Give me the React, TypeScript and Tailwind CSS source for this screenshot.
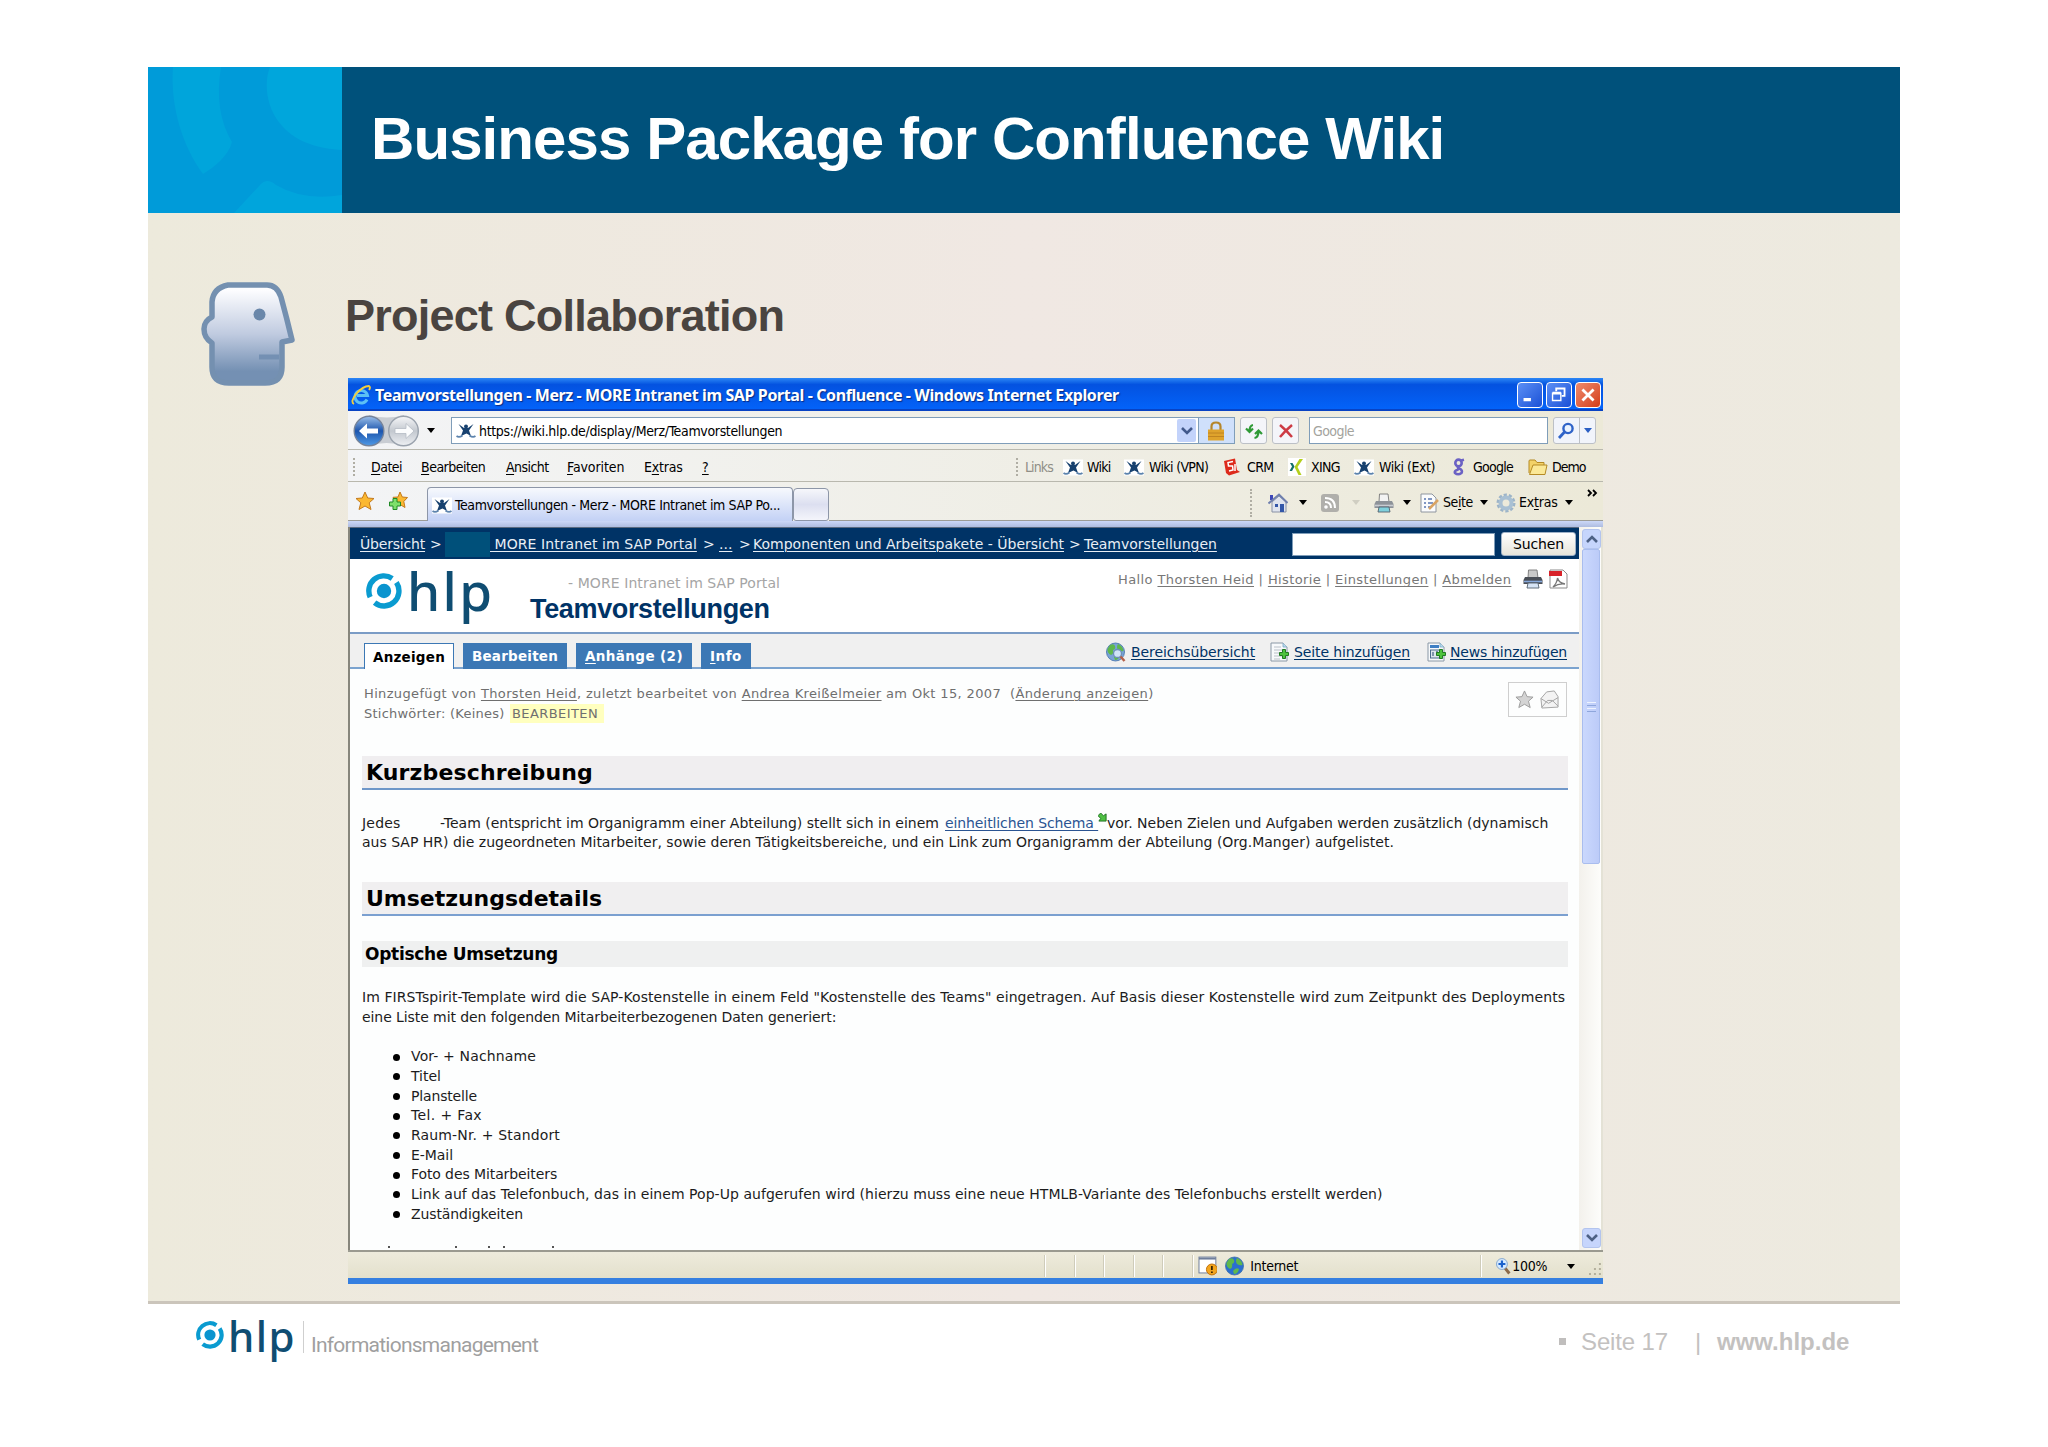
import type { ReactNode } from 'react';

const links = [
  { label: 'Wiki', icon: 'wiki', box: 'ml-[10px] w-[20px]', text: 'ml-[4px] w-[23px] tracking-[-0.75px]' },
  { label: 'Wiki (VPN)', icon: 'wiki', box: 'ml-[14px] w-[20px]', text: 'ml-[5px] w-[59px] tracking-[-0.66px]' },
  { label: 'CRM', icon: 'crm', box: 'ml-[15px] w-[18px]', text: 'ml-[6px] w-[26px] tracking-[-0.6px]' },
  { label: 'XING', icon: 'xing', box: 'ml-[15px] w-[18px]', text: 'ml-[5px] w-[29px] tracking-[-0.7px]' },
  { label: 'Wiki (Ext)', icon: 'wiki', box: 'ml-[14px] w-[20px]', text: 'ml-[5px] w-[56px] tracking-[-0.48px]' },
  { label: 'Google', icon: 'google', box: 'ml-[15px] w-[18px]', text: 'ml-[5px] w-[40px] tracking-[-0.73px]' },
  { label: 'Demo', icon: 'folder', box: 'ml-[15px] w-[20px]', text: 'ml-[4px] w-[33px] tracking-[-1px]' },
];

const bullets = [
  { text: 'Vor- + Nachname', className: 'tracking-[0.14px]' },
  { text: 'Titel', className: '' },
  { text: 'Planstelle', className: 'tracking-[-0.16px]' },
  { text: 'Tel. + Fax', className: 'tracking-[0.36px]' },
  { text: 'Raum-Nr. + Standort', className: 'tracking-[0.15px]' },
  { text: 'E-Mail', className: 'tracking-[-0.06px]' },
  { text: 'Foto des Mitarbeiters', className: 'tracking-[-0.1px]' },
  {
    text: 'Link auf das Telefonbuch, das in einem Pop-Up aufgerufen wird (hierzu muss eine neue HTMLB-Variante des Telefonbuchs erstellt werden)',
    className: 'tracking-[0.04px]',
  },
  { text: 'Zuständigkeiten', className: 'tracking-[-0.1px]' },
];

interface TextProps {
  children: ReactNode;
  className?: string;
}

// One line of text in a slot of fixed width
function T({ children, className = '' }: TextProps) {
  return <span className={`block shrink-0 whitespace-pre ${className}`}>{children}</span>;
}

function U({ children }: { children: ReactNode }) {
  return <span className="underline decoration-1 underline-offset-2">{children}</span>;
}

function HlpRing({ className }: { className: string }) {
  return (
    <svg viewBox="0 0 36 36" className={className} fill="none" stroke="#0a9bd0">
      <circle cx="18" cy="18" r="7.2" fill="#0a94cf" stroke="none" />
      <path d="M4.2 24.1A15 15 0 0 1 26.2 5.4" strokeWidth="5.4" />
      <path d="M30.4 9.6A15 15 0 0 1 8.6 29.7" strokeWidth="5.4" />
    </svg>
  );
}

function HeaderArt() {
  return (
    <svg viewBox="0 0 194 146" className="h-[146px] w-[194px] shrink-0 bg-[#009bd9]">
      <path d="M25 0H73C68 30 72 55 84 75C80 90 66 100 55 107C35 80 22 40 25 0Z" fill="#00a5db" />
      <path d="M122 0C112 25 122 80 194 83V0Z" fill="#00a6dc" />
      <path d="M86 146L112 118Q119 110 128 118Q155 134 194 128V146Z" fill="#00a5dc" />
    </svg>
  );
}

function Face() {
  return (
    <svg viewBox="0 0 94 104" className="h-[104px] w-[94px] shrink-0">
      <defs>
        <linearGradient id="face" x1="0" y1="0" x2="0" y2="1">
          <stop offset="0.05" stopColor="#fdfdff" />
          <stop offset="0.5" stopColor="#c0cbe0" />
          <stop offset="0.88" stopColor="#7490b3" />
        </linearGradient>
      </defs>
      <path
        d="M27 3H66Q76 3 80 15Q86 37 91 58L81 60V85Q81 101 64 101H28Q11 101 11 85V61Q3 56 3 47Q3 39 11 35V20Q12 6 27 3Z"
        fill="url(#face)"
        stroke="#7490b0"
        strokeWidth="5.5"
        strokeLinejoin="round"
      />
      <circle cx="58.5" cy="32.5" r="6" fill="#6a87aa" />
      <path d="M58 75H78" stroke="#7490b3" strokeWidth="5" />
    </svg>
  );
}

function WikiIcon() {
  return (
    <svg viewBox="0 0 20 16" className="h-[17px] w-[20px] shrink-0">
      <rect width="20" height="16" fill="#fff" />
      <circle cx="10" cy="4" r="2" fill="#17416f" />
      <path d="M2.5 1.5L8 5.500H12L17.500 1.500L13 8L15 13.500L10.500 11L5 13.500L7 8Z" fill="#17416f" />
      <path d="M0.500 13.500Q3 15.500 6.500 13M19.500 13.500Q17 15.500 13.500 13" stroke="#5c83ad" strokeWidth="1.8" fill="none" />
    </svg>
  );
}

function StarIcon({ add }: { add?: boolean }) {
  return (
    <svg viewBox="0 0 20 20" className="size-[20px] shrink-0">
      <path
        d={add ? 'M12 1L14.300 6L19.500 6.500L15.800 10.500L17 16.500L12 13.500L6 15L7.500 9.500L5 6.300L10 6Z' : 'M10 1L12.700 7L19 7.500L14.200 11.800L16 18.500L10 15L4 18.500L5.800 11.800L1 7.500L7.300 7Z'}
        fill="#fbb831"
        stroke="#c47a1c"
        strokeLinejoin="round"
      />
      {add && <path d="M5 7.500H9V11H12.500V15H9V18.500H5V15H1.500V11H5Z" fill="#7ee06b" stroke="#1f8a26" />}
    </svg>
  );
}

function IeIcon() {
  return (
    <svg viewBox="0 0 20 20" className="size-[20px] shrink-0" fill="none">
      <path d="M16 14.500A6.300 6.300 0 1 1 16.500 10.500H6" stroke="#5cc0f5" strokeWidth="3" />
      <path d="M3 19Q-1 17 5 9Q12 1 18 1Q20 2 18 5" stroke="#f4cf3c" strokeWidth="1.8" />
    </svg>
  );
}

function Globe({ lens }: { lens?: boolean }) {
  return (
    <svg viewBox="0 0 20 20" className="size-[20px] shrink-0">
      <circle cx="9.5" cy="10" r="9" fill={lens ? '#79a3d6' : '#2a6fd0'} stroke="#3d6ea8" strokeWidth="0.8" />
      <path d="M4 3Q8 1 9 4Q10 7 7 8Q8 12 5 13Q1 11 1.500 7ZM12 2Q17 4 17.500 9Q15 10 12 8Q10 5 12 2ZM8 15Q11 11 14 13Q13 18 9 18Z" fill="#5fb84c" />
      {lens && (
        <>
          <circle cx="11.5" cy="11.5" r="4" fill="#cfe3f7" stroke="#6b8fb8" strokeWidth="1.3" />
          <path d="M14.500 14.500L18.500 19" stroke="#b5614a" strokeWidth="2.5" />
        </>
      )}
    </svg>
  );
}

function PageIcon({ news }: { news?: boolean }) {
  return (
    <svg viewBox="0 0 20 20" className="size-[20px] shrink-0">
      <path d="M1 1H13L17 5V19H1Z" fill="#f7f9fb" stroke="#8a98a6" />
      <path d="M13 1V5H17" fill="#b7dcf0" stroke="#7fa7c4" strokeWidth="0.8" />
      {news ? (
        <>
          <rect x="3" y="3" width="9" height="3" fill="#3f7fc4" />
          <rect x="3.5" y="8" width="9" height="8" fill="#dfe6ee" stroke="#4c6b8d" />
          <path d="M6 10V14M9 10H11" stroke="#4c6b8d" strokeWidth="1.3" />
        </>
      ) : (
        <path d="M4 5H11M4 8H13M4 11H13M4 14H13M4 17H10" stroke="#b9c0c8" />
      )}
      <path d="M12.500 7.500H15.500V10.500H18.500V13.500H15.500V16.500H12.500V13.500H9.500V10.500H12.500Z" fill="#4ec23d" stroke="#217a22" />
    </svg>
  );
}

function Printer({ dark }: { dark?: boolean }) {
  return (
    <svg viewBox="0 0 20 20" className="size-[20px] shrink-0">
      <path d="M5.500 1H14L15 9H5Z" fill={dark ? '#c9c9c9' : '#f3f3f3'} stroke="#777" strokeWidth="0.9" />
      <path d="M2 8H18L19.500 11V15H0.500V11Z" fill={dark ? '#4a4f57' : '#8d9299'} />
      <path d="M1 12.500H19" stroke={dark ? '#86a9dc' : '#c8ccd2'} strokeWidth="1.6" />
      <path d="M5 14H15L16 19H4Z" fill={dark ? '#d6e4f6' : '#7fd0dc'} stroke="#54616e" strokeWidth="0.9" />
    </svg>
  );
}

function Arrow({ className = 'fill-black' }: { className?: string }) {
  return (
    <svg viewBox="0 0 8 5" className={`h-[5px] w-[8px] shrink-0 ${className}`}>
      <path d="M0 0H8L4 5Z" />
    </svg>
  );
}

function LinkIcon({ name }: { name: string }) {
  if (name === 'wiki') return <WikiIcon />;
  if (name === 'crm') {
    return (
      <svg viewBox="0 0 18 18" className="size-[18px] shrink-0">
        <path d="M1 3L12 0.500L14 12L17 14L6 17.500L3 15Z" fill="#dd2a1b" />
        <path d="M10 3.500L5 4.500L5.500 8L9.500 8L10 12L6 13M12 6V13" stroke="#fff" strokeWidth="1.5" fill="none" />
      </svg>
    );
  }
  if (name === 'xing') {
    return (
      <svg viewBox="0 0 18 18" className="size-[18px] shrink-0 bg-white">
        <path d="M2 5H4.500L6.500 8.500L4 13H1.500L4 8.500Z" fill="#12706b" />
        <path d="M11.500 1H15L9.500 9L13.500 17H10.500L6.500 9Z" fill="#b4cf1c" />
      </svg>
    );
  }
  if (name === 'google') {
    return (
      <svg viewBox="0 0 18 18" className="size-[18px] shrink-0" fill="none" stroke="#6c62c4" strokeWidth="2.6">
        <ellipse cx="8.5" cy="5" rx="3.2" ry="3.4" />
        <path d="M9.500 8.500Q6.500 9.500 9 10.500Q13 12 11.500 15Q8 17.500 5 15Q4 12.500 8.500 11.500M11 2.500L14 1.800" />
      </svg>
    );
  }
  return (
    <svg viewBox="0 0 20 17" className="h-[17px] w-[20px] shrink-0" stroke="#b58a24" strokeLinejoin="round">
      <path d="M1 14V2Q1 1 2 1H7L9 3.500H16V6" fill="#f3d268" />
      <path d="M1.500 15.500L5 6H19L17 15.500Z" fill="#fbe896" />
    </svg>
  );
}

function Dots() {
  return <div className="h-[18px] w-0 shrink-0 border-l-2 border-dotted border-[#b0aea4]" />;
}

function TitleBar() {
  return (
    <div className="flex h-[33px] items-center bg-linear-to-b from-[#2d86f5] via-[#0452e0] via-20% to-[#0364fb] pl-[3px] shadow-[inset_0_-2px_0_#0843c4]">
      <IeIcon />
      <T className="ml-[4px] w-[744px] pt-px font-['Noto_Sans'] text-[16px] font-bold tracking-[-0.39px] text-white [text-shadow:1px_1px_1px_#0a2a80]">
        Teamvorstellungen - Merz - MORE Intranet im SAP Portal - Confluence - Windows Internet Explorer
      </T>
      <div className="mr-[2px] ml-auto flex gap-[3px]">
        <svg viewBox="0 0 26 26" className="size-[26px] rounded-[4px] border border-white bg-linear-to-br from-[#5c8ff5] to-[#1a4fd6]">
          <path d="M6 18H14" stroke="#fff" strokeWidth="3.5" />
        </svg>
        <svg viewBox="0 0 26 26" className="size-[26px] rounded-[4px] border border-white bg-linear-to-br from-[#5c8ff5] to-[#1a4fd6]" fill="none" stroke="#fff">
          <path d="M10 9V6H19V14H16" strokeWidth="2" />
          <path d="M6 11H15V19H6Z" strokeWidth="1.5" />
          <path d="M6 11H15" strokeWidth="3" />
        </svg>
        <svg viewBox="0 0 26 26" className="size-[26px] rounded-[4px] border border-white bg-linear-to-br from-[#ef8a6c] to-[#d33a12]">
          <path d="M7 7L19 19M19 7L7 19" stroke="#fff" strokeWidth="3" />
        </svg>
      </div>
    </div>
  );
}

function AddressRow() {
  return (
    <div className="flex h-[39px] items-center border-b border-[#b9b8ae] bg-linear-to-r from-[#f3f4f6] to-[#ece9d8] pt-px pl-[5px]">
      <svg viewBox="0 0 68 34" className="h-[34px] w-[68px] shrink-0">
        <defs>
          <linearGradient id="back" x1="0" y1="0" x2="0" y2="1">
            <stop offset="0" stopColor="#9cc0ea" />
            <stop offset="0.5" stopColor="#1d55ad" />
            <stop offset="1" stopColor="#4f9ae6" />
          </linearGradient>
          <linearGradient id="fwd" x1="0" y1="0" x2="0" y2="1">
            <stop offset="0" stopColor="#f6f7f9" />
            <stop offset="0.5" stopColor="#c3c8cf" />
            <stop offset="1" stopColor="#eef0f3" />
          </linearGradient>
        </defs>
        <path d="M16 1Q34 6 51 1V32Q34 26 16 32Z" fill="#c9cdd3" />
        <circle cx="16" cy="17" r="14.8" fill="url(#back)" stroke="#75839a" strokeWidth="1.4" />
        <circle cx="50.5" cy="17" r="14.8" fill="url(#fwd)" stroke="#9aa2ad" strokeWidth="1.4" />
        <path d="M6 17L14 9.500V14.500H25V19.500H14V24.500Z" fill="#fff" />
        <path d="M61 17L53 9.500V14.500H42V19.500H53V24.500Z" fill="#fbfcfd" stroke="#b5bbc4" strokeWidth="0.8" />
      </svg>
      <Arrow className="ml-[6px] fill-black" />
      <div className="ml-[16px] flex h-[27px] w-[784px] items-center border border-[#7f9db9] bg-white pl-[4px]">
        <WikiIcon />
        <T className="ml-[3px] w-[303px] pt-[2px] text-[14px] tracking-[-0.34px]">https://wiki.hlp.de/display/Merz/Teamvorstellungen</T>
        <div className="ml-auto flex h-[23px] w-[19px] items-center justify-center rounded-[2px] bg-[#c3d3fb]">
          <svg viewBox="0 0 12 8" className="h-[8px] w-[12px]">
            <path d="M1 1L6 6L11 1" fill="none" stroke="#42598c" strokeWidth="2.6" />
          </svg>
        </div>
        <div className="ml-[2px] flex h-[25px] w-[36px] items-center justify-center border-l border-[#7f9db9] bg-[#cfe0fb]">
          <svg viewBox="0 0 18 20" className="mr-[2px] h-[20px] w-[18px]">
            <path d="M4.500 9V5.500Q4.500 1.500 9 1.500Q13.500 1.500 13.500 5.500V9" fill="none" stroke="#b5862a" strokeWidth="2.2" />
            <rect x="1" y="8.5" width="16" height="11" fill="#dfa32c" />
            <path d="M1 12H17M1 15.500H17" stroke="#c08420" />
          </svg>
        </div>
      </div>
      <div className="ml-[5px] flex h-[27px] w-[27px] items-center justify-center rounded-[3px] border border-[#bcc0c6] bg-[#f4f5f9]">
        <svg viewBox="0 0 18 18" className="size-[18px]" fill="none" stroke="#2f9a36" strokeWidth="2.2">
          <path d="M8 3Q4.500 3.500 4.500 9.500M1 6.500L4.500 10L8 6.500M9.500 16Q13.500 15.500 13.500 9M10 12L13.500 8.500L17 12" />
        </svg>
      </div>
      <div className="ml-[5px] flex h-[27px] w-[27px] items-center justify-center rounded-[3px] border border-[#bcc0c6] bg-[#f4f5f9]">
        <svg viewBox="0 0 16 16" className="size-[16px]">
          <path d="M2 2Q8 7 14 14M14 2Q7 8 2 14" stroke="#cd3b44" strokeWidth="2.5" fill="none" />
        </svg>
      </div>
      <div className="ml-[10px] flex h-[27px] w-[239px] items-center border border-[#7f9db9] bg-white pl-[3px]">
        <T className="w-[41px] pt-[2px] text-[14px] tracking-[-0.57px] text-[#a3a39d]">Google</T>
      </div>
      <div className="ml-[5px] flex h-[27px] w-[43px] items-center rounded-[3px] border border-[#bcc0c6] bg-[#f1f4fb]">
        <svg viewBox="0 0 18 18" className="ml-[3px] size-[18px]">
          <circle cx="11" cy="6.5" r="4.6" fill="#eaf3ff" stroke="#2f63c8" strokeWidth="2.4" />
          <path d="M7.500 10L2 16" stroke="#2f63c8" strokeWidth="2.8" />
        </svg>
        <div className="ml-[4px] h-full w-px bg-[#bcc0c6]" />
        <Arrow className="ml-[4px] fill-[#2a5fc4]" />
      </div>
    </div>
  );
}

function MenuRow() {
  return (
    <div className="flex h-[32px] items-center border-b border-[#b9b8ae] bg-linear-to-r from-[#f3f4f6] to-[#ece9d8] pt-[3px] pl-[5px] text-[14px]">
      <Dots />
      <T className="ml-[16px] w-[32px] tracking-[-0.5px]"><U>D</U>atei</T>
      <T className="ml-[18px] w-[65px] tracking-[-0.5px]"><U>B</U>earbeiten</T>
      <T className="ml-[20px] w-[42px] tracking-[-0.55px]"><U>A</U>nsicht</T>
      <T className="ml-[19px] w-[58px] tracking-[-0.1px]"><U>F</U>avoriten</T>
      <T className="ml-[19px] w-[38px] tracking-[-0.2px]">E<U>x</U>tras</T>
      <T className="ml-[20px] w-[7px]"><U>?</U></T>
      <div className="w-[307px] shrink-0" />
      <Dots />
      <T className="ml-[7px] w-[28px] tracking-[-0.9px] text-[#8f8e86]">Links</T>
      {links.map((link) => (
        <div key={link.label} className="flex items-center">
          <div className={`flex justify-center ${link.box}`}>
            <LinkIcon name={link.icon} />
          </div>
          <T className={link.text}>{link.label}</T>
        </div>
      ))}
    </div>
  );
}

function TabRow() {
  return (
    <div className="flex h-[45px] flex-col bg-linear-to-r from-[#f3f4f6] to-[#ece9d8]">
      <div className="flex h-[39px] text-[14px]">
        <div className="flex w-[79px] gap-[13px] border-b border-[#9c9c96] pt-[9px] pl-[7px]">
          <StarIcon />
          <StarIcon add />
        </div>
        <div className="mt-[5px] flex w-[366px] items-center rounded-t-[4px] border border-b-0 border-[#8d96a8] bg-linear-to-b from-[#f7f9fd] to-[#c3d1f5] pt-[2px] pl-[4px]">
          <WikiIcon />
          <T className="ml-[3px] w-[326px] tracking-[-0.38px]">Teamvorstellungen - Merz - MORE Intranet im SAP Po...</T>
        </div>
        <div className="mt-[6px] w-[36px] rounded-t-[4px] rounded-b-[3px] border border-[#8d96a8] bg-linear-to-b from-[#f6f7fb] via-[#dcdff0] to-[#f4f5fb]" />
        <div className="flex grow items-center border-b border-[#9c9c96] pt-[3px] pl-[421px]">
          <div className="h-[28px] w-0 border-l-2 border-dotted border-[#b0aea4]" />
          <svg viewBox="0 0 20 20" className="ml-[16px] size-[20px]">
            <path d="M4 9V19H18V9L11 3Z" fill="#dfe4ee" stroke="#8891a5" />
            <path d="M2 2H5V7H2Z" fill="#3c46b8" />
            <path d="M0.500 10.500L11 1.500L19.500 10" fill="none" stroke="#6f7fae" strokeWidth="2" />
            <path d="M7 11H10V14H7ZM12 11H16V19H12Z" fill="#3357a8" />
          </svg>
          <Arrow className="ml-[11px] fill-black" />
          <svg viewBox="0 0 18 18" className="ml-[14px] size-[18px]" fill="none" stroke="#fff" strokeWidth="2">
            <rect width="18" height="18" rx="3" fill="#b0afab" stroke="none" />
            <path d="M4 8Q10 8 10 14M4 4Q14 4 14 14" />
            <circle cx="5" cy="13" r="0.8" />
          </svg>
          <Arrow className="ml-[13px] fill-[#d0cec2]" />
          <div className="w-[14px]" />
          <Printer />
          <Arrow className="ml-[9px] fill-black" />
          <svg viewBox="0 0 20 20" className="ml-[9px] size-[20px]">
            <path d="M1 1H12L16 5V19H1Z" fill="#fbfcfd" stroke="#8e959f" />
            <path d="M4 6H6M4 10H6M4 14H6M8 6H12M8 10H13M8 14H11" stroke="#5976b0" strokeWidth="1.5" />
            <path d="M9 16L18 7" stroke="#d9a464" strokeWidth="2.5" />
          </svg>
          <T className="ml-[3px] w-[30px] tracking-[-0.4px]">Se<U>i</U>te</T>
          <Arrow className="ml-[7px] fill-black" />
          <svg viewBox="0 0 20 20" className="ml-[8px] size-[20px]" fill="none">
            <circle cx="10" cy="10" r="8.2" stroke="#9db4c8" strokeWidth="2.6" strokeDasharray="3.2 1.95" />
            <circle cx="10" cy="10" r="5.5" stroke="#a9c0d3" strokeWidth="4" />
          </svg>
          <T className="ml-[3px] w-[39px] tracking-[-0.2px]">Ex<U>t</U>ras</T>
          <Arrow className="ml-[7px] fill-black" />
          <svg viewBox="0 0 11 8" className="mb-[20px] ml-[14px] h-[8px] w-[11px]" fill="none" stroke="#000" strokeWidth="1.8">
            <path d="M1 1L4 4L1 7M6 1L9 4L6 7" />
          </svg>
        </div>
      </div>
      <div className="h-[6px] bg-linear-to-b from-[#ccd8f8] to-[#aebce0]" />
    </div>
  );
}

function Breadcrumb() {
  return (
    <div className="flex h-[32px] items-center border-t border-[#5a6a80] bg-[#003366] pt-px pl-[10px] text-[14px] text-[#e8eef5]">
      <T className="w-[65px] tracking-[-0.19px]"><U>Übersicht</U></T>
      <T className="ml-[5px] w-[12px]">&gt;</T>
      <div className="ml-[3px] h-[25px] w-[45px] shrink-0 bg-[#00507a]" />
      <T className="w-[207px] tracking-[0.08px]"><U> MORE Intranet im SAP Portal</U></T>
      <T className="ml-[6px] w-[12px]">&gt;</T>
      <T className="ml-[4px] w-[14px]"><U>...</U></T>
      <T className="ml-[6px] w-[12px]">&gt;</T>
      <T className="ml-[2px] w-[310px]"><U>Komponenten und Arbeitspakete - Übersicht</U></T>
      <T className="ml-[6px] w-[12px]">&gt;</T>
      <T className="ml-[3px] w-[134px]"><U>Teamvorstellungen</U></T>
      <div className="ml-[74px] h-[23px] w-[203px] border border-[#7f9db9] bg-white" />
      <div className="ml-[6px] flex h-[24px] w-[75px] items-center justify-center rounded-[3px] border border-[#9fb2c8] bg-linear-to-b from-white to-[#e6e4da] text-black">
        <T className="w-[51px] tracking-[-0.14px]">Suchen</T>
      </div>
    </div>
  );
}

function WikiHeader() {
  return (
    <div className="flex h-[73px] bg-white pl-[16px]">
      <HlpRing className="mt-[14px] size-[36px] shrink-0" />
      <T className="-mt-[8px] ml-[5px] w-[88px] font-['Noto_Sans'] text-[53px] leading-[80px] font-medium tracking-[2.3px] text-[#0f4d72]">hlp</T>
      <div className="ml-[35px] w-[260px]">
        <T className="mt-[11px] ml-[38px] w-[212px] text-[14px] leading-[26px] tracking-[0.08px] text-[#a5a5a5]">- MORE Intranet im SAP Portal</T>
        <T className="w-[240px] font-['Liberation_Sans'] text-[27px] leading-[27px] font-bold tracking-[-0.35px] text-[#003366]">Teamvorstellungen</T>
      </div>
      <div className="ml-auto flex h-[40px] items-center pr-[11px] text-[13px] text-[#777]">
        <T className="w-[393px] pt-[2px] tracking-[0.4px]">
          Hallo <U>Thorsten Heid</U> | <U>Historie</U> | <U>Einstellungen</U> | <U>Abmelden</U>
        </T>
        <div className="ml-[12px]"><Printer dark /></div>
        <svg viewBox="0 0 19 20" className="ml-[6px] h-[20px] w-[19px]">
          <path d="M1 1H14L18 5V19H1Z" fill="#fff" stroke="#8b8b8b" />
          <path d="M0 2H13V7H0Z" fill="#d8232a" />
          <path d="M4 18Q8 14 8.500 9Q10 14 16 15Q10 14 4 18Z" fill="none" stroke="#777" strokeWidth="1.3" />
        </svg>
      </div>
    </div>
  );
}

function WikiTabs() {
  return (
    <div className="flex h-[37px] items-end border-t-2 border-[#7b9cc6] bg-[#f0f0f0] text-[13.5px] font-bold text-white shadow-[inset_0_-2px_0_#7ba3cf]">
      <div className="ml-[14px] flex h-[26px] w-[90px] items-center border border-b-0 border-[#3c78b5] bg-white pt-px pl-[8px] text-black">
        <T className="w-[72px] tracking-[0.23px]">Anzeigen</T>
      </div>
      <div className="ml-[9px] flex h-[26px] w-[104px] items-center bg-[#3c78b5] pt-px pl-[9px]">
        <T className="w-[86px] tracking-[0.21px]">Bearbeiten</T>
      </div>
      <div className="ml-[9px] flex h-[26px] w-[116px] items-center bg-[#3c78b5] pt-px pl-[9px]">
        <T className="w-[98px] tracking-[0.39px]"><U>A</U>nhänge (2)</T>
      </div>
      <div className="ml-[9px] flex h-[26px] w-[50px] items-center bg-[#3c78b5] pt-px pl-[9px]">
        <T className="w-[32px] tracking-[0.5px]"><U>I</U>nfo</T>
      </div>
      <div className="ml-auto flex h-[34px] items-center pr-[12px] text-[14px] font-normal text-[#003366]">
        <Globe lens />
        <T className="ml-[5px] w-[124px] tracking-[-0.08px]"><U>Bereichsübersicht</U></T>
        <div className="w-[15px]" />
        <PageIcon />
        <T className="ml-[4px] w-[116px] tracking-[-0.12px]"><U>Seite hinzufügen</U></T>
        <div className="w-[17px]" />
        <PageIcon news />
        <T className="ml-[3px] w-[117px] tracking-[-0.22px]"><U>News hinzufügen</U></T>
      </div>
    </div>
  );
}

function WikiBody() {
  return (
    <div className="h-[581px] overflow-hidden bg-[#fdfefe] pr-[11px] pl-[12px] text-[14px] text-[#1c1c1c]">
      <div className="flex h-[87px] justify-between pt-[13px] pl-[2px]">
        <div className="pt-[2px] text-[13px] leading-[19.5px] text-[#6f6f6f]">
          <T className="w-[790px] tracking-[0.355px]">
            Hinzugefügt von <U>Thorsten Heid</U>, zuletzt bearbeitet von <U>Andrea Kreißelmeier</U> am Okt 15, 2007  (<U>Änderung anzeigen</U>)
          </T>
          <div className="flex">
            <T className="w-[140px] tracking-[0.23px]">Stichwörter: (Keines)</T>
            <div className="ml-[6px] w-[94px] bg-[#ffffbf] pl-[2px]">
              <T className="w-[86px] tracking-[0.42px]">BEARBEITEN</T>
            </div>
          </div>
        </div>
        <div className="mr-[1px] flex h-[35px] w-[59px] items-center justify-center gap-[5px] border border-[#cfcfcf]">
          <svg viewBox="0 0 20 20" className="size-[19px]">
            <path d="M10 1L12.700 7L19 7.500L14.200 11.800L16 18.500L10 15L4 18.500L5.800 11.800L1 7.500L7.300 7Z" fill="#d4d4d4" stroke="#9a9a9a" />
          </svg>
          <svg viewBox="0 0 22 20" className="h-[19px] w-[21px]" fill="#f3f3f3" stroke="#a2a2a2" strokeLinejoin="round">
            <path d="M2 9L8 2L16 1L20 7V18L3 19Z" />
            <path d="M3 18L9 11L14 11L20 17M2 9L10 14L20 8" fill="none" />
          </svg>
        </div>
      </div>
      <div className="flex h-[34px] items-center border-b-2 border-[#6f97c9] bg-[#f0eef0] pt-px pl-[4px] text-[22px] font-bold text-black">
        <T className="w-[227px] tracking-[0.15px]">Kurzbeschreibung</T>
      </div>
      <div className="pt-[24px] leading-[18.5px]">
        <div className="flex">
          <T className="w-[39px] tracking-[0.2px]">Jedes</T>
          <T className="ml-[39px] w-[498px]">-Team (entspricht im Organigramm einer Abteilung) stellt sich in einem</T>
          <T className="ml-[7px] w-[153px] tracking-[-0.1px] text-[#2a5492]"><U>einheitlichen Schema </U></T>
          <svg viewBox="0 0 10 10" className="-mt-px h-[9px] w-[9px]">
            <path d="M0 3L3 0L6 3L9 1V9H1L3 6Z" fill="#4fc043" stroke="#1a6c1c" />
          </svg>
          <T className="w-[441px] tracking-[-0.02px]">vor. Neben Zielen und Aufgaben werden zusätzlich (dynamisch</T>
        </div>
        <T className="w-[1031px]">aus SAP HR) die zugeordneten Mitarbeiter, sowie deren Tätigkeitsbereiche, und ein Link zum Organigramm der Abteilung (Org.Manger) aufgelistet.</T>
      </div>
      <div className="mt-[31px] flex h-[34px] items-center border-b-2 border-[#7ba0d0] bg-[#f0eff0] pt-px pl-[4px] text-[22px] font-bold text-black">
        <T className="w-[236px] tracking-[-0.03px]">Umsetzungsdetails</T>
      </div>
      <div className="mt-[25px] flex h-[26px] items-center bg-[#eff0f0] pt-px pl-[3px] text-[17px] font-bold text-black">
        <T className="w-[193px] tracking-[-0.28px]">Optische Umsetzung</T>
      </div>
      <div className="pt-[21px] leading-[19.67px]">
        <T className="w-[1203px] tracking-[0.08px]">Im FIRSTspirit-Template wird die SAP-Kostenstelle in einem Feld "Kostenstelle des Teams" eingetragen. Auf Basis dieser Kostenstelle wird zum Zeitpunkt des Deployments</T>
        <T className="w-[474px] tracking-[-0.08px]">eine Liste mit den folgenden Mitarbeiterbezogenen Daten generiert:</T>
      </div>
      <ul className="mt-[20px] leading-[19.67px]">
        {bullets.map((bullet) => (
          <li key={bullet.text} className="flex items-center pl-[31px]">
            <span className="mr-[11px] size-[7px] rounded-full bg-black" />
            <T className={bullet.className}>{bullet.text}</T>
          </li>
        ))}
      </ul>
      {/* top edge of the next paragraph, cut off by the viewport */}
      <div className="mt-[22px] flex pl-[26px]">
        <i className="h-[2px] w-[2px] bg-[#555]" />
        <i className="ml-[65px] h-[2px] w-[2px] bg-[#555]" />
        <i className="ml-[31px] h-[2px] w-[2px] bg-[#555]" />
        <i className="ml-[13px] h-[2px] w-[2px] bg-[#555]" />
        <i className="ml-[47px] h-[2px] w-[2px] bg-[#555]" />
      </div>
    </div>
  );
}

function ScrollButton({ down }: { down?: boolean }) {
  return (
    <div className="flex h-[20px] w-[19px] shrink-0 items-center justify-center rounded-[3px] border border-[#b3c4ee] bg-[#c6d5fc]">
      <svg viewBox="0 0 12 8" className="h-[8px] w-[12px]">
        <path d={down ? 'M1 1L6 6L11 1' : 'M1 7L6 2L11 7'} fill="none" stroke="#4d6185" strokeWidth="2.6" />
      </svg>
    </div>
  );
}

function Scrollbar() {
  return (
    <div className="flex w-[24px] flex-col items-start border-r-2 border-[#e4e2d6] bg-linear-to-r from-[#f3f1ec] to-[#fdfdfb] pt-[2px] pb-[2px] pl-[3px]">
      <ScrollButton />
      <div className="flex h-[315px] w-[18px] flex-col items-center justify-center gap-[2px] rounded-[2px] border border-[#a9bdee] bg-linear-to-r from-[#cad8fd] to-[#bccbf8]">
        <i className="h-px w-[9px] bg-[#eef3fe]" />
        <i className="h-px w-[9px] bg-[#8ea6dc]" />
        <i className="h-px w-[9px] bg-[#eef3fe]" />
        <i className="h-px w-[9px] bg-[#8ea6dc]" />
      </div>
      <div className="grow" />
      <ScrollButton down />
    </div>
  );
}

function StatusBar() {
  return (
    <div className="flex h-[28px] items-center border-t-2 border-[#9b9a90] bg-linear-to-b from-[#eeebdc] to-[#e3e0cc] pt-[2px] pl-[696px] text-[14px]">
      {[0, 1, 2, 3, 4].map((n) => (
        <i key={n} className="mr-[27.5px] h-[22px] w-[2px] shrink-0 border-l border-[#cfccba] bg-white" />
      ))}
      <i className="h-[22px] w-[2px] shrink-0 border-l border-[#cfccba] bg-white" />
      <svg viewBox="0 0 20 20" className="ml-[4px] size-[20px]">
        <rect x="1" y="1" width="17" height="16" fill="#fff" stroke="#6f7f9c" />
        <path d="M1 2.500H18" stroke="#6f7f9c" strokeWidth="2" />
        <circle cx="14" cy="13.5" r="5.5" fill="#f3a51c" stroke="#c0720e" />
        <path d="M14 10V14M14 15.500V17" stroke="#3a2500" strokeWidth="1.8" />
      </svg>
      <div className="w-[8px]" />
      <Globe />
      <T className="ml-[5px] w-[49px] pt-px tracking-[-0.25px]">Internet</T>
      <i className="ml-[181px] h-[22px] w-[2px] shrink-0 border-l border-[#cfccba] bg-white" />
      <svg viewBox="0 0 16 18" className="ml-[13px] h-[18px] w-[16px]">
        <path d="M10 11L14.500 16.500" stroke="#8d6a48" strokeWidth="3" />
        <circle cx="7" cy="7" r="5.5" fill="#d6eaff" stroke="#88a9cf" />
        <path d="M7 3.500V10.500M3.500 7H10.500" stroke="#1c62cc" strokeWidth="2.2" />
      </svg>
      <T className="ml-px w-[36px] pt-px tracking-[-0.2px]">100%</T>
      <Arrow className="ml-[19px] fill-black" />
      <svg viewBox="0 0 14 14" className="mt-[8px] ml-[14px] size-[14px]" fill="#b3b09d">
        <path d="M10 0H12V2H10ZM5 5H7V7H5ZM10 5H12V7H10ZM0 10H2V12H0ZM5 10H7V12H5ZM10 10H12V12H10Z" />
      </svg>
    </div>
  );
}

export default function App() {
  return (
    <div className="h-[1447px] w-[2048px] overflow-hidden bg-white pt-[67px] pl-[148px] font-['DejaVu_Sans_Condensed','DejaVu_Sans',sans-serif]">
      <div className="w-[1752px]">
        <header className="flex h-[146px] items-center bg-[#00517b]">
          <HeaderArt />
          <T className="ml-[29px] w-[1075px] pb-[2px] font-['Liberation_Sans'] text-[60px] font-bold tracking-[-0.92px] text-white">Business Package for Confluence Wiki</T>
        </header>
        <main className="h-[1091px] border-b-[3px] border-[#cbc5bb] bg-linear-to-r from-[#edeadc] via-[#f0e8e3] to-[#edeadf]">
          <div className="flex h-[165px] pt-[69px] pl-[53px]">
            <Face />
            <T className="ml-[50px] w-[439px] pt-[9px] font-['Liberation_Sans'] text-[45px] leading-[50px] font-bold tracking-[-0.75px] text-[#4a4440]">Project Collaboration</T>
          </div>
          <div className="ml-[200px] w-[1255px]">
            <TitleBar />
            <AddressRow />
            <MenuRow />
            <TabRow />
            <div className="flex h-[723px] border-l-2 border-[#87867c] bg-white">
              <div className="w-[1229px] font-['DejaVu_Sans',sans-serif]">
                <Breadcrumb />
                <WikiHeader />
                <WikiTabs />
                <WikiBody />
              </div>
              <Scrollbar />
            </div>
            <StatusBar />
            <div className="h-[6px] bg-[#357fe0]" />
          </div>
        </main>
        <footer className="flex pl-[48px]">
          <HlpRing className="mt-[17px] size-[28px] shrink-0" />
          <T className="mt-[2px] ml-[4px] w-[70px] font-['Noto_Sans'] text-[42px] leading-[60px] font-medium tracking-[1.4px] text-[#0f4d72]">hlp</T>
          <div className="mt-[17px] ml-[5px] h-[32px] w-px bg-[#cfcfcf]" />
          <T className="ml-[7px] w-[227px] pt-[30px] font-['Roboto',sans-serif] text-[21px] leading-[22px] tracking-[-0.76px] text-[#9f9f9f]">Informationsmanagement</T>
          <div className="mt-[34px] ml-[1021px] size-[7px] bg-[#c0bebd]" />
          <T className="ml-[15px] w-[88px] pt-[24px] font-['Liberation_Sans'] text-[24px] leading-[28px] tracking-[-0.13px] text-[#c3c1c0]">Seite 17</T>
          <T className="ml-[26px] w-[6px] pt-[24px] font-['Liberation_Sans'] text-[24px] leading-[28px] text-[#c3c1c0]">|</T>
          <T className="ml-[16px] w-[133px] pt-[24px] font-['Liberation_Sans'] text-[24px] leading-[28px] font-bold text-[#c3c1c0]">www.hlp.de</T>
        </footer>
      </div>
    </div>
  );
}
